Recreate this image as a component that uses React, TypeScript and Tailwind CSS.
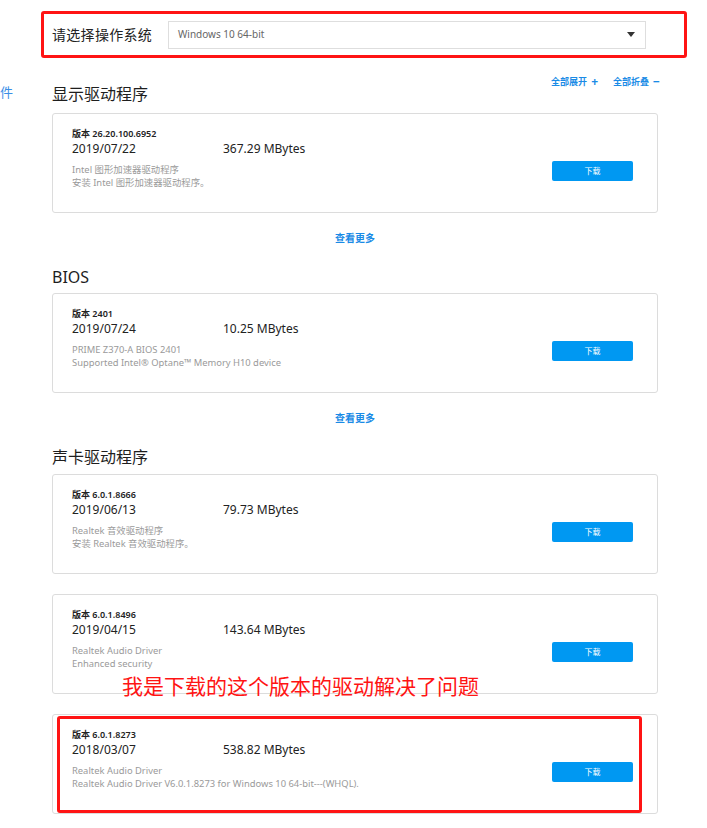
import React from "react";

const FONT = { fontFamily: "'Noto Sans', 'Noto Sans CJK SC', sans-serif" };

type Item = {
  version: string;
  date: string;
  size: string;
  lines: string[];
  highlight?: boolean;
};

function Card({ item }: { item: Item }) {
  return (
    <div className="relative h-[100px] rounded-[3px] border border-[#dcdcdc] bg-white flex items-start pl-[19px] pr-[24px]">
      <div className="flex-1 pt-[13px]">
        <div className="text-[9px] leading-[14px] font-semibold text-[#222]">{item.version}</div>
        <div className="flex text-[12px] leading-[16px] text-[#222]">
          <div className="w-[151px]">{item.date}</div>
          <div>{item.size}</div>
        </div>
        <div className="mt-[6px] text-[9.4px] leading-[13px] text-[#9a9a9a]">
          {item.lines.map((l, i) => (
            <div key={i}>{l}</div>
          ))}
        </div>
      </div>
      <button className="mt-[47px] w-[81px] h-[20px] rounded-[2px] bg-[#0098f2] text-white text-[8px] leading-[20px]">
        下载
      </button>
      {item.highlight && (
        <div className="absolute left-[4px] top-[1px] w-[585px] h-[97px] border-[3px] border-[#ff1414] rounded-[3px] pointer-events-none" />
      )}
    </div>
  );
}

function Title({ children, className = "" }: { children: React.ReactNode; className?: string }) {
  return <div className={"text-[16px] leading-[22px] text-[#1e1e1e] " + className}>{children}</div>;
}

function More() {
  return (
    <div className="h-[51px] flex items-center justify-center text-[10px] font-bold text-[#1a8be6]">
      查看更多
    </div>
  );
}

export default function App() {
  const display: Item = {
    version: "版本 26.20.100.6952",
    date: "2019/07/22",
    size: "367.29 MBytes",
    lines: ["Intel 图形加速器驱动程序", "安装 Intel 图形加速器驱动程序。"],
  };
  const bios: Item = {
    version: "版本 2401",
    date: "2019/07/24",
    size: "10.25 MBytes",
    lines: ["PRIME Z370-A BIOS 2401", "Supported Intel® Optane™ Memory H10 device"],
  };
  const audio: Item[] = [
    {
      version: "版本 6.0.1.8666",
      date: "2019/06/13",
      size: "79.73 MBytes",
      lines: ["Realtek 音效驱动程序", "安装 Realtek 音效驱动程序。"],
    },
    {
      version: "版本 6.0.1.8496",
      date: "2019/04/15",
      size: "143.64 MBytes",
      lines: ["Realtek Audio Driver", "Enhanced security"],
    },
    {
      version: "版本 6.0.1.8273",
      date: "2018/03/07",
      size: "538.82 MBytes",
      lines: ["Realtek Audio Driver", "Realtek Audio Driver V6.0.1.8273 for Windows 10 64-bit---(WHQL)."],
      highlight: true,
    },
  ];

  return (
    <div className="w-[707px] h-[828px] overflow-hidden bg-white relative" style={FONT}>
      <div className="pt-[11px] pl-[41px]">
        <div className="w-[646px] h-[47px] border-[3px] border-[#ff1414] rounded-[3px] flex items-center pl-[8px] pr-[38px]">
          <div className="w-[116px] text-[14px] text-[#222] tracking-[0.3px]">请选择操作系统</div>
          <div className="flex-1 h-[28px] border border-[#dedede] flex items-center pl-[9px] pr-[10px]">
            <span className="flex-1 text-[10px] text-[#666]">Windows 10 64-bit</span>
            <svg width="8" height="5" viewBox="0 0 8 5">
              <path d="M0 0 L8 0 L4 5 Z" fill="#333" />
            </svg>
          </div>
        </div>
      </div>

      <div className="flex">
        <div className="w-[52px] shrink-0">
          <div className="mt-[25px] text-[13px] text-[#3a8ee6]">件</div>
        </div>
        <div className="w-[606px]">
          <div className="h-[20px] mt-[14px] flex justify-end items-center gap-[15px] text-[9px] font-bold text-[#1a8be6] -mr-[2px]">
            <span className="flex items-center gap-[4px]">
              全部展开<span className="text-[12px] leading-[12px]">+</span>
            </span>
            <span className="flex items-center gap-[4px]">
              全部折叠<span className="text-[12px] leading-[12px]">−</span>
            </span>
          </div>
          <Title className="mt-[-9px] mb-[8px]">显示驱动程序</Title>
          <Card item={display} />
          <More />
          <Title className="mt-[2px] mb-[5px]">BIOS</Title>
          <Card item={bios} />
          <More />
          <Title className="mt-[2px] mb-[6px]">声卡驱动程序</Title>
          <div className="flex flex-col gap-[20px] relative">
            {audio.map((a, i) => (
              <Card key={i} item={a} />
            ))}
            <div className="absolute left-[70px] top-[199px] text-[21px] leading-[26px] text-[#ff1414] whitespace-nowrap">
              我是下载的这个版本的驱动解决了问题
            </div>
          </div>
        </div>
      </div>
    </div>
  );
}
